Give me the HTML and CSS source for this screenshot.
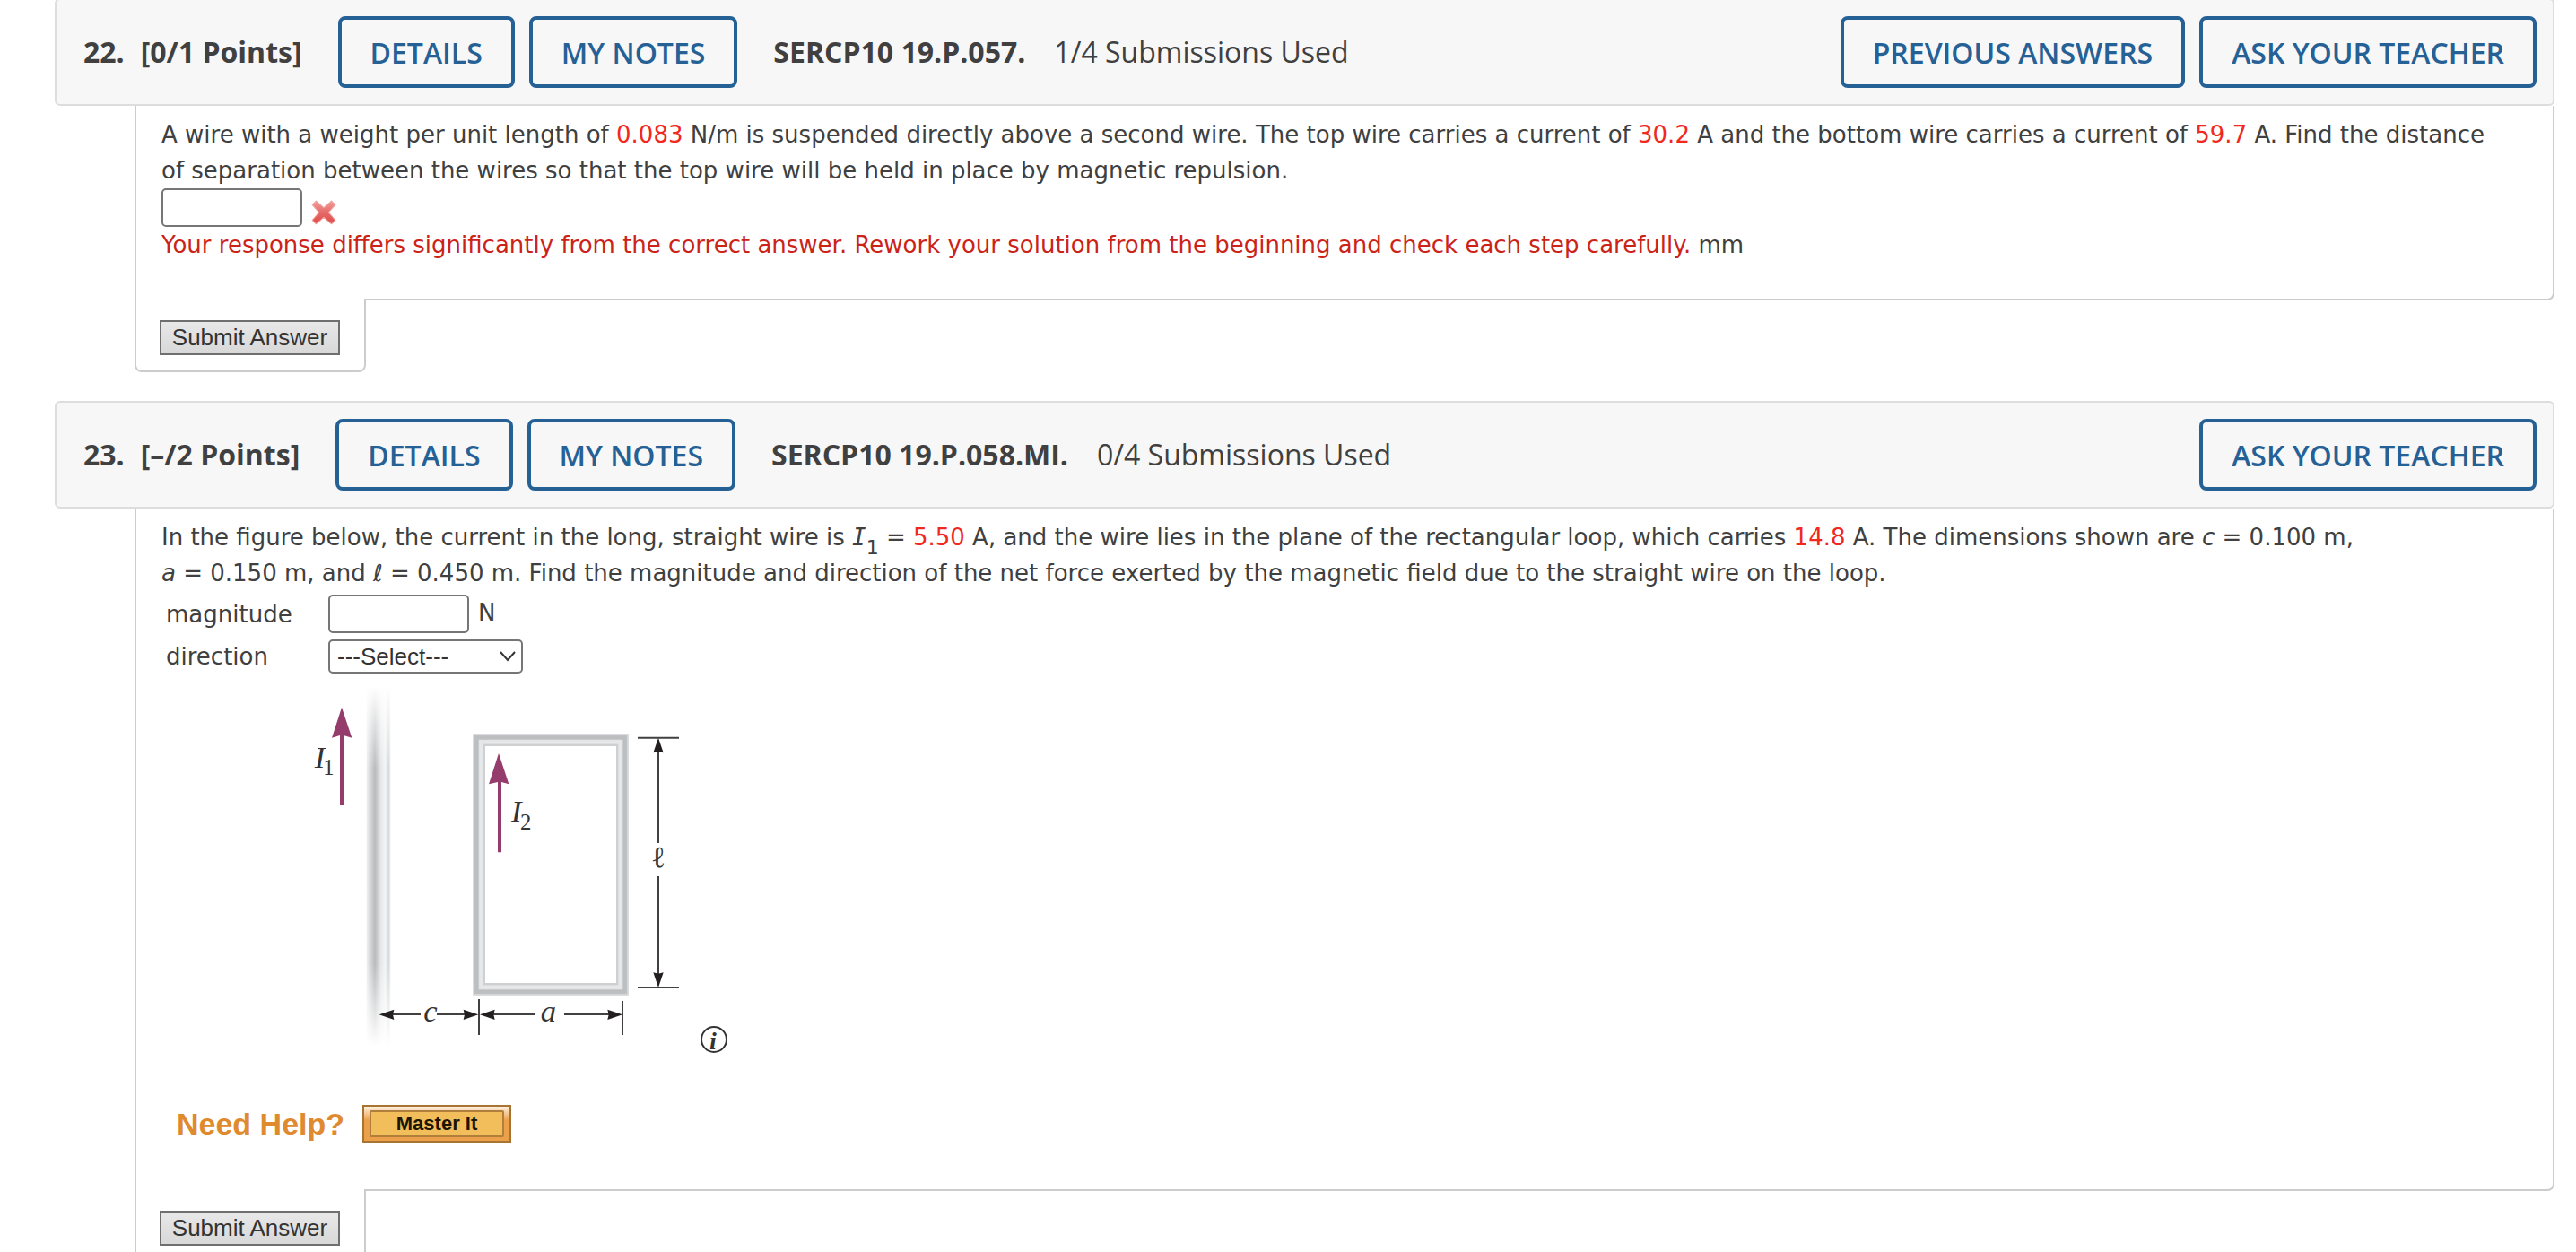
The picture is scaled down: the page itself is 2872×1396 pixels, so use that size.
FILE: index.html
```html
<!DOCTYPE html>
<html lang="en">
  <head>
    <meta charset="UTF-8" />
    <meta name="viewport" content="width=device-width, initial-scale=1.0" />
    <title>Assignment</title>
    <link rel="stylesheet" href="styles.css">
  </head>
  <body>
    <section class="question">
      <header class="question-header">
        <span class="number">22.</span>
        <span class="points">[0/1 Points]</span>
        <button class="header-btn">DETAILS</button>
        <button class="header-btn">MY NOTES</button>
        <span class="source">SERCP10 19.P.057.</span>
        <span class="used">1/4 Submissions Used</span>
        <div class="header-right">
          <button class="header-btn">PREVIOUS ANSWERS</button>
          <button class="header-btn">ASK YOUR TEACHER</button>
        </div>
      </header>
      <div class="question-body">
        <p class="prompt">
          A wire with a weight per unit length of <span class="value">0.083</span> N/m is suspended directly above a second wire. The top wire carries a current of <span class="value">30.2</span> A and the bottom wire carries a current of <span class="value">59.7</span> A. Find the distance of separation between the wires so that the top wire will be held in place by magnetic repulsion.
        </p>
        <div class="answer-line">
          <input class="answer" type="text" aria-label="Distance in mm" />
          <svg class="wrong" viewBox="1 0 26 28" aria-label="Incorrect">
            <defs>
              <linearGradient id="wrong-fill" x1="0" y1="0" x2="0" y2="1">
                <stop offset="0" stop-color="#f2a09c" />
                <stop offset="0.5" stop-color="#e56a67" />
                <stop offset="1" stop-color="#e04a48" />
              </linearGradient>
            </defs>
            <path fill="url(#wrong-fill)" stroke="#f0a5a2" stroke-linejoin="round" d="M6 1 L14 8 L22 1 L26 5 L19 13 L26 21 L22 25 L14 18 L6 25 L2 21 L9 13 L2 5 Z" />
          </svg>
        </div>
        <p class="feedback"><span class="error">Your response differs significantly from the correct answer. Rework your solution from the beginning and check each step carefully.</span> mm</p>
      </div>
      <div class="submit-tab">
        <button class="submit">Submit Answer</button>
      </div>
    </section>

    <section class="question">
      <header class="question-header">
        <span class="number">23.</span>
        <span class="points">[–/2 Points]</span>
        <button class="header-btn">DETAILS</button>
        <button class="header-btn">MY NOTES</button>
        <span class="source">SERCP10 19.P.058.MI.</span>
        <span class="used">0/4 Submissions Used</span>
        <div class="header-right">
          <button class="header-btn">ASK YOUR TEACHER</button>
        </div>
      </header>
      <div class="question-body">
        <p class="prompt">
          In the figure below, the current in the long, straight wire is <i class="symbol">I</i><sub>1</sub> = <span class="value">5.50</span> A, and the wire lies in the plane of the rectangular loop, which carries <span class="value">14.8</span> A. The dimensions shown are <span class="nowrap"><i>c</i> = 0.100 m,</span> <span class="nowrap"><i>a</i> = 0.150 m,</span> and ℓ = 0.450 m. Find the magnitude and direction of the net force exerted by the magnetic field due to the straight wire on the loop.
        </p>
        <div class="fields">
          <label for="magnitude">magnitude</label>
          <div class="field"><input class="answer" type="text" id="magnitude" /> N</div>
          <label for="direction">direction</label>
          <div class="select-wrap">
            <select class="direction" id="direction">
              <option>---Select---</option>
            </select>
            <svg class="chevron" viewBox="0 0 18 12">
              <path d="M1 1 L9 10 L17 1" fill="none" stroke="#333" stroke-width="2" />
            </svg>
          </div>
        </div>
        <div class="figure">
          <svg class="diagram" viewBox="0 0 1344 1290" role="img" aria-label="Long wire beside a rectangular loop">
            <defs>
              <linearGradient id="wire" x1="0" y1="0" x2="1" y2="0">
                <stop offset="0" stop-color="#f0f0f1" />
                <stop offset="0.12" stop-color="#dcdddf" />
                <stop offset="0.35" stop-color="#b9babc" />
                <stop offset="0.6" stop-color="#e6e7e9" />
                <stop offset="0.78" stop-color="#f3f4f5" />
                <stop offset="0.92" stop-color="#d6d8da" />
                <stop offset="1" stop-color="#eeeff0" />
              </linearGradient>
              <linearGradient id="fade" x1="0" y1="0" x2="0" y2="1">
                <stop offset="0" stop-color="#000" />
                <stop offset="0.23" stop-color="#fff" />
                <stop offset="0.77" stop-color="#fff" />
                <stop offset="1" stop-color="#000" />
              </linearGradient>
              <mask id="wire-ends">
                <rect x="260" y="15" width="95" height="1205" fill="url(#fade)" />
              </mask>
            </defs>
            <!-- long wire -->
            <rect x="266" y="15" width="80" height="1205" fill="url(#wire)" mask="url(#wire-ends)" />
            <!-- loop -->
            <g fill="none">
              <rect x="642" y="195" width="480" height="834" stroke="#d3d5d7" stroke-width="41" />
              <rect x="634" y="187" width="496" height="850" stroke="#bcbec0" stroke-width="13" />
              <rect x="649" y="202" width="466" height="820" stroke="#e6e7e9" stroke-width="13" />
              <rect x="660" y="213" width="444" height="798" stroke="#cccecf" stroke-width="5" />
            </g>
            <!-- currents -->
            <g fill="#943c6b">
              <path d="M183 86 L217 188 L189 180 V414 H177 V180 L150 188 Z" />
              <path d="M708 240 L742 343 L717 336 V571 H705 V336 L675 343 Z" />
            </g>
            <!-- dimension lines -->
            <g stroke="#414042" stroke-width="6">
              <path d="M1173 188 H1311 M1173 1023 H1311 M1242 230 V540 M1242 651 V980" />
              <path d="M642 1062 V1182 M1122 1068 V1182" />
              <path d="M350 1113 H447 M501 1113 H600 M685 1113 H831 M927 1113 H1080" />
            </g>
            <g fill="#231f20">
              <path d="M1242 188 L1259 238 L1242 234 L1225 238 Z" />
              <path d="M1242 1023 L1259 973 L1242 977 L1225 973 Z" />
              <path d="M308 1114 L358 1097 L354 1114 L358 1131 Z" />
              <path d="M640 1114 L590 1097 L594 1114 L590 1131 Z" />
              <path d="M645 1114 L695 1097 L691 1114 L695 1131 Z" />
              <path d="M1122 1114 L1072 1097 L1076 1114 L1072 1131 Z" />
            </g>
            <g class="diagram-text">
              <text class="italic" x="92" y="288">I</text>
              <text class="index" x="121" y="312">1</text>
              <text class="italic" x="750" y="467">I</text>
              <text class="index" x="780" y="494">2</text>
              <text class="italic" x="457" y="1138">c</text>
              <text class="italic" x="848" y="1138">a</text>
              <text class="ell" x="1218" y="622">ℓ</text>
            </g>
          </svg>
          <svg class="info" viewBox="0 0 30 30" aria-label="Image description">
            <circle cx="15" cy="15" r="14" fill="none" stroke="#333" stroke-width="2" />
            <text x="10" y="26">i</text>
          </svg>
        </div>
        <div class="help">
          <span class="help-label">Need Help?</span>
          <button class="master-it"><span>Master It</span></button>
        </div>
      </div>
      <div class="submit-tab">
        <button class="submit">Submit Answer</button>
      </div>
    </section>
  </body>
</html>
```
FILE: styles.css
```css
* {
  box-sizing: border-box;
}
body {
  margin: -2px 24px 0 61px;
  background-color: #fff;
  color: #404040;
  font-family: "DejaVu Sans", Verdana, sans-serif;
  font-size: 26px;
  line-height: 40px;
}
p {
  margin: 0;
}
.question {
  margin-bottom: 32px;
}
.question-header {
  display: flex;
  align-items: center;
  min-height: 120px;
  padding: 0 18px 0 30px;
  border: 2px solid #ddd;
  border-radius: 6px;
  background-color: #f7f7f7;
  font-family: "Open Sans", sans-serif;
  font-size: 32px;
}
.number,
.points,
.source {
  font-weight: bold;
}
.number {
  margin-right: 18px;
}
.points {
  margin-right: 40px;
}
.header-btn {
  height: 80px;
  margin-right: 16px;
  padding: 0 32px;
  border: 4px solid #266196;
  border-radius: 8px;
  background-color: transparent;
  color: #266196;
  font-family: inherit;
  font-size: 32px;
  font-weight: 600;
  cursor: pointer;
}
.source {
  margin-left: 24px;
  margin-right: 32px;
}
.header-right {
  display: flex;
  margin-left: auto;
}
.header-right .header-btn:last-child {
  margin-right: 0;
}
.question-body {
  margin-left: 89px;
  padding: 12px 24px 40px 28px;
  border: 2px solid #ccc;
  border-top: none;
  border-radius: 0 0 8px 0;
}
.prompt {
  padding-right: 30px;
}
.value {
  color: #f0281e;
}
.nowrap {
  white-space: nowrap;
}
/* the mono face has the serifed capital I */
.symbol {
  font-family: "DejaVu Sans Mono", monospace;
}
sub {
  font-size: 22px;
  line-height: 0;
  vertical-align: -10px;
}
.answer {
  width: 157px;
  height: 43px;
  border: 2px solid #767676;
  border-radius: 5px;
  background-color: #fff;
  font-size: 26px;
}
.answer-line {
  display: flex;
  align-items: flex-end;
  gap: 10px;
}
.wrong {
  width: 28px;
  height: 30px;
}
.error {
  color: #cc2318;
}
.submit-tab {
  width: 258px;
  margin: -2px 0 0 89px;
  padding: 24px 26px 17px;
  border: 2px solid #ccc;
  border-top: none;
  border-radius: 0 0 8px 8px;
  background-color: #fff;
}
.submit {
  display: block;
  width: 201px;
  height: 39px;
  padding: 0;
  border: 2px solid #6f6f6f;
  background: linear-gradient(#e8e8e8, #d8d8d8);
  color: #333;
  font-family: "Liberation Sans", Arial, sans-serif;
  font-size: 26px;
  cursor: pointer;
}
.fields {
  display: grid;
  grid-template-columns: 181px auto;
  justify-content: start;
  align-items: center;
  row-gap: 6px;
  padding: 4px 0 0 5px;
}
.field {
  display: flex;
  gap: 10px;
}
.select-wrap {
  display: flex;
  position: relative;
}
.direction {
  appearance: none;
  width: 217px;
  height: 38px;
  padding: 0 8px;
  border: 2px solid #767676;
  border-radius: 5px;
  background-color: #fff;
  color: #333;
  font-family: "Liberation Sans", Arial, sans-serif;
  font-size: 26px;
}
.chevron {
  position: absolute;
  top: 13px;
  right: 8px;
  width: 18px;
  height: 12px;
  pointer-events: none;
}
.figure {
  display: flex;
  align-items: flex-end;
  gap: 13px;
  padding: 8px 0 0 140px;
}
.diagram {
  width: 448px;
  height: 430px;
}
.diagram-text {
  fill: #333;
  font-family: "Liberation Serif", serif;
}
.italic {
  font-size: 104px;
  font-style: italic;
}
.index {
  font-size: 74px;
}
.ell {
  font-size: 100px;
}
.info {
  width: 30px;
  height: 30px;
  margin-bottom: 16px;
  overflow: visible;
  font-family: "Liberation Serif", serif;
  font-size: 28px;
  font-style: italic;
  font-weight: bold;
  fill: #333;
}
.help {
  display: flex;
  align-items: center;
  gap: 20px;
  padding: 42px 0 12px 17px;
}
.help-label {
  color: #e08a30;
  font-family: "Liberation Sans", Arial, sans-serif;
  font-size: 34px;
  font-weight: bold;
}
.master-it {
  width: 166px;
  height: 42px;
  padding: 4px 6px;
  border: 2px solid #a87432;
  background: linear-gradient(#fdeedd, #eda04a 40%);
  cursor: pointer;
}
.master-it span {
  display: block;
  border: 2px solid #b07f3c;
  border-radius: 2px;
  background-color: #f2be5c;
  color: #1d1503;
  font-family: "Liberation Sans", Arial, sans-serif;
  font-size: 22px;
  font-weight: bold;
  line-height: 26px;
}
```
